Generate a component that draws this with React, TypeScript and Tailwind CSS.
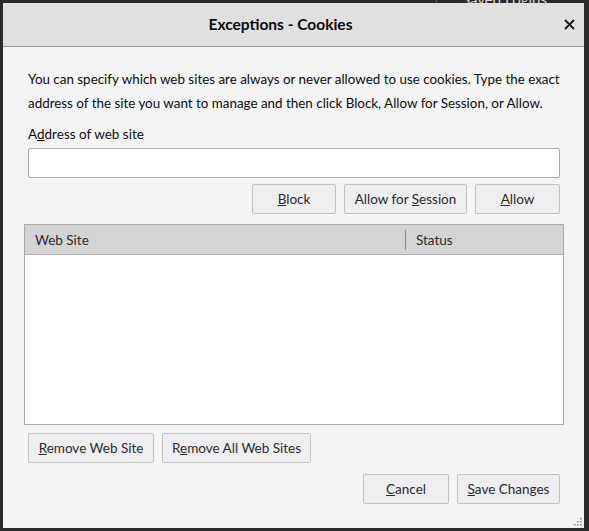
import React from 'react';

const font = { fontFamily: 'Lato, "Noto Sans", sans-serif' };

function Btn({ children, className = '' }: { children: React.ReactNode; className?: string }) {
  return (
    <button
      className={`h-[30px] whitespace-nowrap rounded-[2px] border border-[#c3c3c3] bg-[#eeeef0] px-2 text-[13.5px] text-[#2b2b2b] ${className}`}
    >
      {children}
    </button>
  );
}

export default function App() {
  return (
    <div className="relative h-[531px] w-[589px] overflow-hidden bg-[#2a2a2a] pl-[3px] pt-[3px]" style={font}>
      {/* page behind the dialog */}
      <span className="absolute left-[462px] top-[-12px] text-[15px] text-[#d8d8d8]">Saved Logins</span>
      <div className="absolute left-[436px] top-0 h-[3px] w-px bg-[#555]" />

      <div className="relative flex h-[525px] w-[581px] flex-col bg-[#f4f4f4]">
        {/* Title bar */}
        <div className="relative flex h-[44px] shrink-0 items-center justify-center border-b border-[#9c9c9c] bg-[#e0e0e0] pr-[26px]">
          <span className="text-[15.5px] font-bold text-[#0c0c0d]">Exceptions - Cookies</span>
          <svg className="absolute right-[9px] top-[16px]" width="11" height="11" viewBox="0 0 11 11">
            <path d="M1 1 L10 10 M10 1 L1 10" stroke="#1a1a1a" strokeWidth="1.8" />
          </svg>
        </div>

        <div className="flex flex-1 flex-col px-[25px] pt-[20px]">
          <p className="w-[540px] text-[13.4px] leading-[24px] text-[#0c0c0d]">
            You can specify which web sites are always or never allowed to use cookies. Type the exact address of the
            site you want to manage and then click Block, Allow for Session, or Allow.
          </p>
          <label className="mt-[7px] text-[13.5px] leading-[24px] text-[#0c0c0d]">
            A<span className="underline">d</span>dress of web site
          </label>
          <input className="mt-[2px] h-[30px] w-[532px] rounded-[2px] border border-[#ababab] bg-white outline-none" />

          <div className="mt-[6px] flex w-[532px] justify-end gap-[8px]">
            <Btn className="w-[84px]">
              <span className="underline">B</span>lock
            </Btn>
            <Btn className="w-[123px]">
              Allow for <span className="underline">S</span>ession
            </Btn>
            <Btn className="w-[85px]">
              <span className="underline">A</span>llow
            </Btn>
          </div>

          {/* Table */}
          <div className="-ml-[4px] mt-[10px] flex h-[201px] w-[540px] flex-col border border-[#acacac] bg-white">
            <div className="flex h-[30px] shrink-0 items-center border-b border-[#acacac] bg-[#d4d4d4] text-[13.5px] text-[#2b2b2b]">
              <div className="w-[381px] border-r border-[#888] pl-[10px] leading-[20px]">Web Site</div>
              <div className="pl-[10px] leading-[20px]">Status</div>
            </div>
            <div className="flex-1" />
          </div>

          <div className="mt-[8px] flex gap-[8px]">
            <Btn className="w-[126px]">
              <span className="underline">R</span>emove Web Site
            </Btn>
            <Btn className="w-[149px]">
              R<span className="underline">e</span>move All Web Sites
            </Btn>
          </div>

          <div className="mt-[11px] flex w-[532px] justify-end gap-[8px]">
            <Btn className="w-[86px]">
              <span className="underline">C</span>ancel
            </Btn>
            <Btn className="w-[103px]">
              <span className="underline">S</span>ave Changes
            </Btn>
          </div>
        </div>

        {/* resize grip */}
        <svg className="absolute bottom-[2px] right-[2px]" width="10" height="10" viewBox="0 0 10 10">
          {[
            [8, 2],
            [8, 5],
            [5, 5],
            [8, 8],
            [5, 8],
            [2, 8],
          ].map(([x, y], i) => (
            <rect key={i} x={x} y={y} width="1.5" height="1.5" fill="#8a8a8a" />
          ))}
        </svg>
      </div>
    </div>
  );
}
